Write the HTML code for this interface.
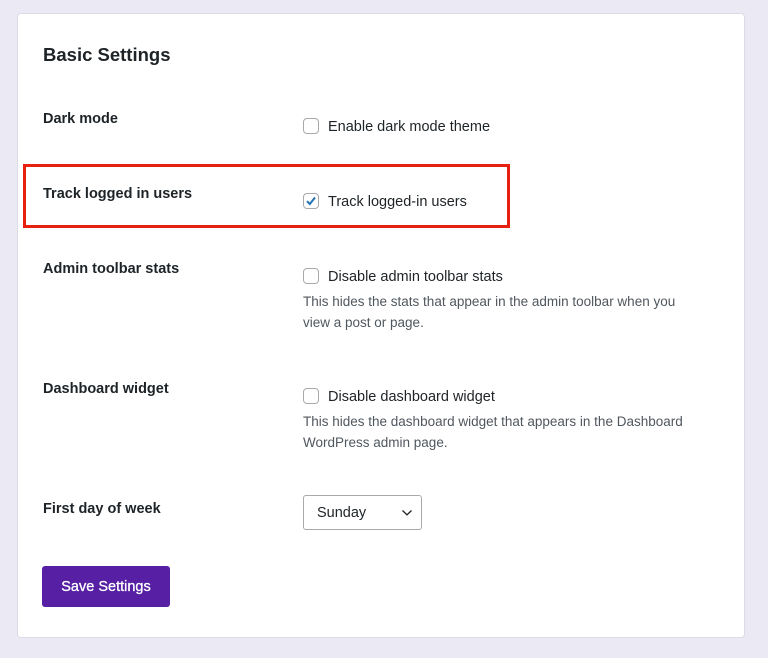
<!DOCTYPE html>
<html><head><meta charset="utf-8"><style>
*{margin:0;padding:0;box-sizing:border-box}
body{width:768px;height:658px;background:#ebe9f3;font-family:"Liberation Sans",sans-serif;position:relative;overflow:hidden;color:#1d2327}
.card{position:absolute;left:17px;top:13px;width:728px;height:625px;background:#fff;border:1px solid #dcdce6;border-radius:4px}
.a{position:absolute;white-space:nowrap}
h2{position:absolute;left:43px;top:44px;font-size:18.5px;font-weight:bold;color:#1d2327}
.lbl{font-size:14.5px;font-weight:bold;color:#1d2327}
.opt{font-size:14.5px;color:#1d2327}
.cb{position:absolute;width:16px;height:16px;border:1px solid #a7aaad;border-radius:4px;background:#fff}
.desc{font-size:13.5px;color:#50575e;line-height:21px;white-space:normal;width:396px}
.red{position:absolute;left:23px;top:164px;width:487px;height:64px;border:3px solid #e8200f}
.sel{position:absolute;left:303px;top:495px;width:119px;height:35px;border:1px solid #a7aaad;border-radius:3px;background:#fff;font-size:14.5px;padding:9px 0 0 13px}
.btn{position:absolute;left:42px;top:566px;width:128px;height:41px;background:#5720a4;border-radius:3px;color:#fff;font-size:14.5px;text-align:center;line-height:42px;-webkit-text-stroke:0.3px #fff}
</style></head><body>
<div class="card"></div>
<h2>Basic Settings</h2>
<div class="a lbl" style="left:43px;top:111px">Dark mode</div>
<div class="cb" style="left:303px;top:118px"></div>
<div class="a opt" style="left:328px;top:119px">Enable dark mode theme</div>

<div class="red"></div>
<div class="a lbl" style="left:43px;top:186px">Track logged in users</div>
<div class="cb" style="left:303px;top:193px"><svg width="14" height="14" viewBox="0 0 14 14" style="position:absolute;left:0;top:0"><path d="M3 7.2 L5.8 10 L11 3.5" fill="none" stroke="#2271b1" stroke-width="2"/></svg></div>
<div class="a opt" style="left:328px;top:194px">Track logged-in users</div>

<div class="a lbl" style="left:43px;top:261px">Admin toolbar stats</div>
<div class="cb" style="left:303px;top:268px"></div>
<div class="a opt" style="left:328px;top:269px">Disable admin toolbar stats</div>
<div class="a desc" style="left:303px;top:291px">This hides the stats that appear in the admin toolbar when you view a post or page.</div>

<div class="a lbl" style="left:43px;top:381px">Dashboard widget</div>
<div class="cb" style="left:303px;top:388px"></div>
<div class="a opt" style="left:328px;top:389px">Disable dashboard widget</div>
<div class="a desc" style="left:303px;top:411px">This hides the dashboard widget that appears in the Dashboard WordPress admin page.</div>

<div class="a lbl" style="left:43px;top:501px">First day of week</div>
<div class="sel">Sunday<svg width="12" height="8" viewBox="0 0 12 8" style="position:absolute;left:97px;top:13px"><path d="M1.5 1.5 L6 5.8 L10.5 1.5" fill="none" stroke="#1d2327" stroke-width="1.3"/></svg></div>
<div class="btn">Save Settings</div>
</body></html>
